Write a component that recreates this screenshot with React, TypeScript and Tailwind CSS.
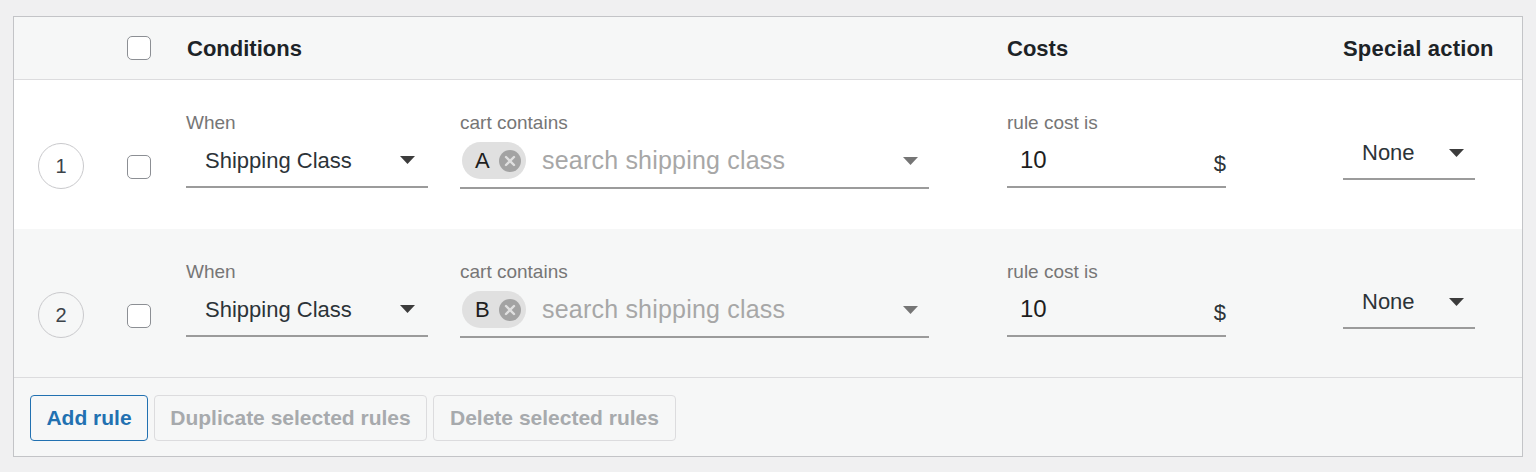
const font = "font-['Liberation_Sans',Arial,sans-serif]";

function Checkbox({ className = '' }: { className?: string }) {
  return (
    <div
      className={`size-[24px] shrink-0 rounded-[5px] border-[1.5px] border-[#8c8f94] bg-white ${className}`}
    />
  );
}

function Caret({ color = '#3c3c3c' }: { color?: string }) {
  return (
    <svg width="15" height="8" viewBox="0 0 15 8" className="shrink-0">
      <path d="M0 0 L15 0 L7.5 8 Z" fill={color} />
    </svg>
  );
}

function Chip({ label }: { label: string }) {
  return (
    <div className="flex h-[37px] w-[64px] shrink-0 items-center rounded-full bg-[#e0e0e0] pl-[13px]">
      <span className="text-[22px] leading-none text-[#1e1e1e]">{label}</span>
      <svg width="22" height="22" viewBox="0 0 22 22" className="ml-[9px]">
        <circle cx="11" cy="11" r="11" fill="#a3a3a3" />
        <path d="M7 7 L15 15 M15 7 L7 15" stroke="#e0e0e0" strokeWidth="2.4" strokeLinecap="round" />
      </svg>
    </div>
  );
}

function Row({ n, chip, bg, h }: { n: number; chip: string; bg: string; h: string }) {
  return (
    <div className={`flex items-start ${h} ${bg}`}>
      <div className="ml-[24px] mt-[63px] flex size-[46px] shrink-0 items-center justify-center rounded-full border border-[#c9c9cc] text-[20px] text-[#3c434a]">
        {n}
      </div>
      <Checkbox className="ml-[43px] mt-[75px]" />

      <div className="ml-[35px] mt-[32px] w-[242px] shrink-0">
        <div className="text-[19px] leading-[22px] text-[#767676]">When</div>
        <div className="flex h-[54px] items-center border-b-2 border-[#9b9b9b] pl-[19px] pr-[13px]">
          <span className="flex-1 text-[22px] text-[#2c3338]">Shipping Class</span>
          <Caret />
        </div>
      </div>

      <div className="ml-[32px] mt-[32px] w-[469px] shrink-0">
        <div className="text-[19px] leading-[22px] text-[#767676]">cart contains</div>
        <div className="flex h-[55px] items-center border-b-2 border-[#9b9b9b] pl-[2px] pr-[11px]">
          <Chip label={chip} />
          <span className="ml-[16px] flex-1 text-[25px] tracking-[0.2px] text-[#a7a7a7]">search shipping class</span>
          <Caret color="#757575" />
        </div>
      </div>

      <div className="ml-[78px] mt-[32px] w-[219px] shrink-0">
        <div className="text-[19px] leading-[22px] text-[#767676]">rule cost is</div>
        <div className="flex h-[54px] items-center border-b-2 border-[#9b9b9b] pl-[13px]">
          <span className="flex-1 text-[24px] text-[#1e1e1e]">10</span>
          <span className="mt-[6px] text-[22px] text-[#2c3338]">$</span>
        </div>
      </div>

      <div className="ml-[117px] mt-[58px] w-[132px] shrink-0">
        <div className="flex items-center border-b-2 border-[#9b9b9b] pb-[10px] pl-[19px] pr-[11px]">
          <span className="flex-1 text-[22px] leading-[30px] text-[#2c3338]">None</span>
          <Caret />
        </div>
      </div>
    </div>
  );
}

export default function App() {
  return (
    <div className={`min-h-screen bg-[#f0f0f1] pt-[16px] ${font}`}>
      <div className="ml-[13px] w-[1510px] border border-[#c3c4c7] bg-white">
        <div className="flex h-[63px] items-center border-b border-[#dcdcde] bg-[#f6f7f7] text-[22px] font-bold text-[#1d2327]">
          <div className="w-[113px] shrink-0" />
          <Checkbox />
          <div className="ml-[36px] w-[820px] shrink-0">Conditions</div>
          <div className="w-[336px] shrink-0">Costs</div>
          <div className="tracking-[0.2px]">Special action</div>
        </div>
        <Row n={1} chip="A" bg="bg-white" h="h-[149px]" />
        <Row n={2} chip="B" bg="bg-[#f6f7f7]" h="h-[148px]" />
        <div className="flex gap-[6px] border-t border-[#dcdcde] bg-[#f6f7f7] pb-[15px] pl-[16px] pt-[17px] text-[21px] font-bold">
          <button className="h-[46px] w-[118px] rounded-[4px] border-[1.5px] border-[#2271b1] bg-[#f6f7f7] text-[#2271b1]">
            Add rule
          </button>
          <button className="h-[46px] w-[273px] rounded-[4px] border border-[#dcdcde] bg-[#f6f7f7] text-[#a7aaad]">
            Duplicate selected rules
          </button>
          <button className="h-[46px] w-[243px] rounded-[4px] border border-[#dcdcde] bg-[#f6f7f7] text-[#a7aaad]">
            Delete selected rules
          </button>
        </div>
      </div>
    </div>
  );
}
